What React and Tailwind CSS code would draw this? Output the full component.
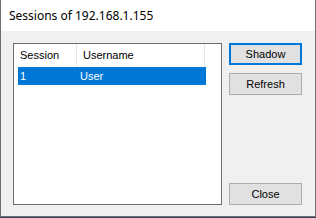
export default function App() {
  const ui = { fontFamily: '"Liberation Sans", Arial, sans-serif' };
  const title = { fontFamily: '"Noto Sans", "Open Sans", sans-serif' };
  return (
    <div className="w-[316px] h-[218px] bg-[#3b4058] overflow-hidden">
      <div className="w-[316px] h-[217px] flex flex-col border-l border-r border-b border-[#707070] bg-[#f0f0f0]">
        <div className="h-[31px] shrink-0 bg-white flex items-center pl-[8px] text-[12px] text-black" style={title}>
          Sessions of 192.168.1.155
        </div>
        <div className="flex pl-[12px] pt-[12px]" style={ui}>
          <div className="w-[209px] h-[162px] border border-[#6f6f6f] bg-white flex flex-col">
            <div className="h-[23px] flex text-[11px] text-black">
              <div className="w-[63px] flex items-center pl-[6px] border-r border-[#e5e5e5]">Session</div>
              <div className="w-[128px] flex items-center pl-[6px] border-r border-[#e5e5e5]">Username</div>
            </div>
            <div className="ml-[4px] w-[188px] h-[18px] bg-[#0078d7] text-white text-[11px] flex items-center">
              <div className="w-[62px] pl-[2px]">1</div>
              <div>User</div>
            </div>
          </div>
          <div className="ml-[7px] h-[162px] flex flex-col justify-between text-[11px] text-black">
            <div className="flex flex-col gap-[8px]">
              <div className="w-[73px] h-[22px] border-2 border-[#0078d7] bg-[#e1e1e1] flex items-center justify-center">Shadow</div>
              <div className="w-[73px] h-[22px] border border-[#adadad] bg-[#e1e1e1] flex items-center justify-center">Refresh</div>
            </div>
            <div className="w-[73px] h-[22px] border border-[#adadad] bg-[#e1e1e1] flex items-center justify-center">Close</div>
          </div>
        </div>
      </div>
    </div>
  );
}
